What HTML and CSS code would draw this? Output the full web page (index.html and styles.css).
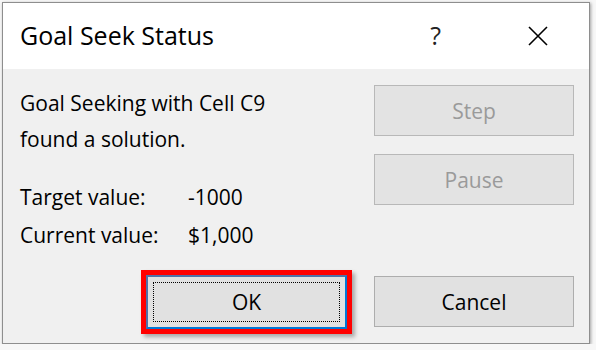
FILE: index.html
```html
<!DOCTYPE html>
<html lang="en">
<head>
    <meta charset="UTF-8">
    <meta name="viewport" content="width=device-width, initial-scale=1.0">
    <title>Goal Seek Status</title>
    <link rel="stylesheet" href="styles.css">
</head>
<body>
    <div class="window">
        <div class="title-bar">
            <span class="title">Goal Seek Status</span>
            <span class="help">?</span>
            <span class="close">
                <svg width="20" height="20" viewBox="0 0 20 20">
                    <path d="M1 1 L19 19 M19 1 L1 19" stroke="#000" stroke-width="1.6" fill="none"/>
                </svg>
            </span>
        </div>

        <div class="content">
            <div class="left-col">
                <p class="message">Goal Seeking with Cell C9<br>found a solution.</p>
                <div class="values">
                    <span>Target value:</span><span>-1000</span>
                    <span>Current value:</span><span>$1,000</span>
                </div>
                <span class="highlight">
                    <button class="btn btn-default">OK</button>
                </span>
            </div>
            <div class="right-col">
                <button class="btn" disabled>Step</button>
                <button class="btn" disabled>Pause</button>
                <button class="btn btn-cancel">Cancel</button>
            </div>
        </div>
    </div>
</body>
</html>
```

FILE: styles.css
```css
/* Base */
body {
    margin: 0;
    background-color: #f7f7f7;
    font-family: 'Open Sans', 'Noto Sans', sans-serif;
    color: #000;
}

/* Dialog window */
.window {
    width: 586px;
    height: 340px;
    margin: 2px 0 0 2px;
    border: 1px solid #8e8e8e;
    background-color: #f0f0f0;
    box-shadow: 1px 1px 3px rgba(0, 0, 0, 0.35);
    display: flex;
    flex-direction: column;
}

/* Title bar */
.title-bar {
    height: 66px;
    background-color: #fff;
    display: flex;
    align-items: center;
    padding: 0 0 0 17px;
}

.title {
    font-size: 25px;
    flex: 1;
    padding-bottom: 2px;
}

.help {
    font-size: 25px;
    color: #222;
    margin-right: 87px;
    padding-bottom: 2px;
}

.close {
    display: flex;
    margin-right: 41px;
}

/* Content */
.content {
    flex: 1;
    display: flex;
    padding: 16px 15px 9px 17px;
}

.left-col {
    flex: 1;
    display: flex;
    flex-direction: column;
    align-items: flex-start;
    font-size: 21px;
}

.message {
    margin: 0 0 21px 0;
    line-height: 36px;
}

.values {
    display: grid;
    grid-template-columns: 168px auto;
    line-height: 38px;
}

.right-col {
    width: 200px;
    display: flex;
    flex-direction: column;
    gap: 18px;
}

/* Buttons */
.btn {
    width: 200px;
    height: 51px;
    font-family: inherit;
    font-size: 21px;
    color: #000;
    background-color: #e1e1e1;
    border: 1px solid #adadad;
    padding: 0;
}

.btn:disabled {
    color: #9a9a9a;
    background-color: #e3e3e3;
    border-color: #b8b8b8;
}

.btn-cancel {
    margin-top: auto;
    margin-bottom: 7px;
}

.highlight {
    margin: auto 0 0 121px;
    border: 5px solid #ff0000;
    box-shadow: 3px 3px 4px rgba(0, 0, 0, 0.3);
    display: flex;
}

.btn-default {
    width: 201px;
    height: 54px;
    border: 2px solid #0078d7;
    border-top-color: #4f72a8;
    border-left-color: #4f72a8;
    outline: 1px dotted #000;
    outline-offset: -8px;
}
```
